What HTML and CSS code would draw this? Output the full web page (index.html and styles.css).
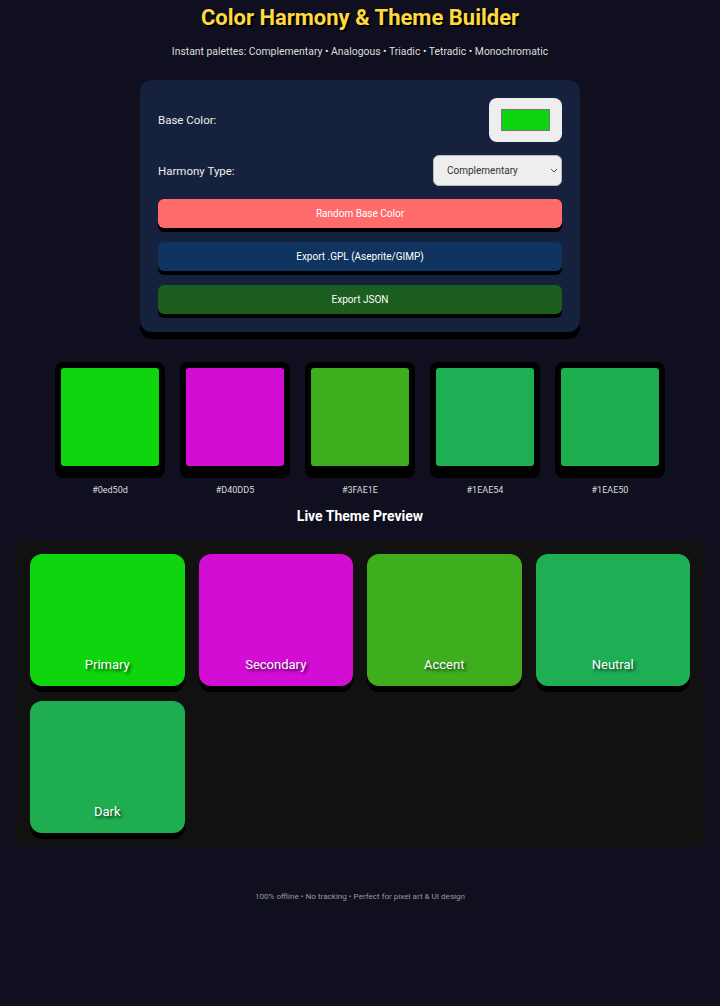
FILE: index.html
```html
<!DOCTYPE html>
<html lang="en">
<head>
    <meta charset="UTF-8">
    <meta name="viewport" content="width=device-width, initial-scale=1.0">
    <title>Color Harmony &amp; Theme Builder</title>
    <link rel="stylesheet" href="styles.css">
</head>
<body>
    <h1>Color Harmony &amp; Theme Builder</h1>
    <p class="subtitle">Instant palettes: Complementary • Analogous • Triadic • Tetradic • Monochromatic</p>

    <div class="panel">
        <div class="row">
            <label for="base-color">Base Color:</label>
            <input type="color" id="base-color" value="#0ed50d">
        </div>
        <div class="row">
            <label for="harmony">Harmony Type:</label>
            <select id="harmony">
                <option>Complementary</option>
                <option>Analogous</option>
                <option>Triadic</option>
                <option>Tetradic</option>
                <option>Monochromatic</option>
            </select>
        </div>
        <button class="btn btn-random">Random Base Color</button>
        <button class="btn btn-gpl">Export .GPL (Aseprite/GIMP)</button>
        <button class="btn btn-json">Export JSON</button>
    </div>

    <div class="palette">
        <div class="swatch-item">
            <div class="swatch-card"><div class="swatch" style="background:#0ed50d"></div></div>
            <span class="hex">#0ed50d</span>
        </div>
        <div class="swatch-item">
            <div class="swatch-card"><div class="swatch" style="background:#D40DD5"></div></div>
            <span class="hex">#D40DD5</span>
        </div>
        <div class="swatch-item">
            <div class="swatch-card"><div class="swatch" style="background:#3FAE1E"></div></div>
            <span class="hex">#3FAE1E</span>
        </div>
        <div class="swatch-item">
            <div class="swatch-card"><div class="swatch" style="background:#1EAE54"></div></div>
            <span class="hex">#1EAE54</span>
        </div>
        <div class="swatch-item">
            <div class="swatch-card"><div class="swatch" style="background:#1EAE50"></div></div>
            <span class="hex">#1EAE50</span>
        </div>
    </div>

    <h2>Live Theme Preview</h2>
    <div class="preview">
        <div class="theme-card" style="background:#0ed50d">Primary</div>
        <div class="theme-card" style="background:#D40DD5">Secondary</div>
        <div class="theme-card" style="background:#3FAE1E">Accent</div>
        <div class="theme-card" style="background:#1EAE54">Neutral</div>
        <div class="theme-card" style="background:#1EAE50">Dark</div>
    </div>

    <footer>100% offline • No tracking • Perfect for pixel art &amp; UI design</footer>
</body>
</html>
```

FILE: styles.css
```css
body {
    font-family: Roboto, 'Liberation Sans', sans-serif;
    margin: 0;
    padding: 4px 15px 40px;
    background-color: #0f0f1f;
    color: #eee;
}
h1 {
    margin: 0;
    text-align: center;
    font-size: 22px;
    font-weight: bold;
    color: #ffd93d;
    text-shadow: 2px 2px 0 #000;
    line-height: 28px;
}
.subtitle {
    margin: 13px 0 21px;
    text-align: center;
    font-size: 10.4px;
    color: #ddd;
    line-height: 14px;
}
.panel {
    width: 404px;
    margin: 0 auto;
    padding: 18px;
    background-color: #16213e;
    border-radius: 12px;
    box-shadow: 0 7px 0 #000;
}
.row {
    display: flex;
    justify-content: space-between;
    align-items: center;
    margin-bottom: 13px;
}
.row label {
    font-size: 11.5px;
    color: #eee;
}
input[type="color"] {
    width: 73px;
    height: 44px;
    padding: 11px 12px;
    border: none;
    border-radius: 8px;
    background-color: #eee;
    cursor: pointer;
}
input[type="color"]::-webkit-color-swatch-wrapper {
    padding: 0;
}
input[type="color"]::-webkit-color-swatch {
    border: 1px solid #777;
}
select {
    -webkit-appearance: none;
    appearance: none;
    width: 129px;
    height: 31px;
    padding: 0 6px 0 13px;
    border: 1px solid #bbb;
    border-radius: 6px;
    background-color: #eee;
    background-image: url("data:image/svg+xml,%3Csvg xmlns='http://www.w3.org/2000/svg' width='8' height='5' viewBox='0 0 8 5'%3E%3Cpath d='M1 1l3 3 3-3' fill='none' stroke='%23555' stroke-width='1'/%3E%3C/svg%3E");
    background-repeat: no-repeat;
    background-position: right 3px center;
    color: #333;
    font-family: Roboto, 'Liberation Sans', sans-serif;
    font-size: 10px;
}
.btn {
    display: block;
    width: 100%;
    height: 29px;
    margin-top: 14px;
    border: none;
    border-radius: 6px;
    color: #fff;
    font-family: Roboto, 'Liberation Sans', sans-serif;
    font-size: 10px;
    cursor: pointer;
    box-shadow: 0 4px 0 #000;
}
.row + .btn {
    margin-top: 0;
}
.btn-random {
    background-color: #ff6b6b;
}
.btn-gpl {
    background-color: #0f3460;
}
.btn-json {
    background-color: #1b5e20;
}
.palette {
    display: flex;
    justify-content: center;
    gap: 15px;
    margin-top: 30px;
}
.swatch-item {
    display: flex;
    flex-direction: column;
    align-items: center;
}
.swatch-card {
    padding: 6px;
    background-color: #000;
    border-radius: 8px;
    box-shadow: 0 6px 0 #000;
}
.swatch {
    width: 98px;
    height: 98px;
    border-radius: 3px;
}
.hex {
    margin-top: 13px;
    font-size: 9px;
    color: #ddd;
}
h2 {
    margin: 11px 0 14px;
    text-align: center;
    font-size: 14px;
    font-weight: bold;
    color: #fff;
    line-height: 20px;
}
.preview {
    display: grid;
    grid-template-columns: repeat(4, 1fr);
    gap: 15px 14px;
    padding: 14px 15px;
    background-color: #111;
    border-radius: 10px;
}
.theme-card {
    height: 132px;
    display: flex;
    align-items: flex-end;
    justify-content: center;
    padding-bottom: 14px;
    box-sizing: border-box;
    border-radius: 12px;
    box-shadow: 0 6px 0 #000;
    font-size: 13px;
    color: #fff;
    text-shadow: 2px 2px 3px rgba(0, 0, 0, 0.7);
}
footer {
    margin-top: 44px;
    text-align: center;
    font-size: 8.1px;
    color: #999;
}
```
